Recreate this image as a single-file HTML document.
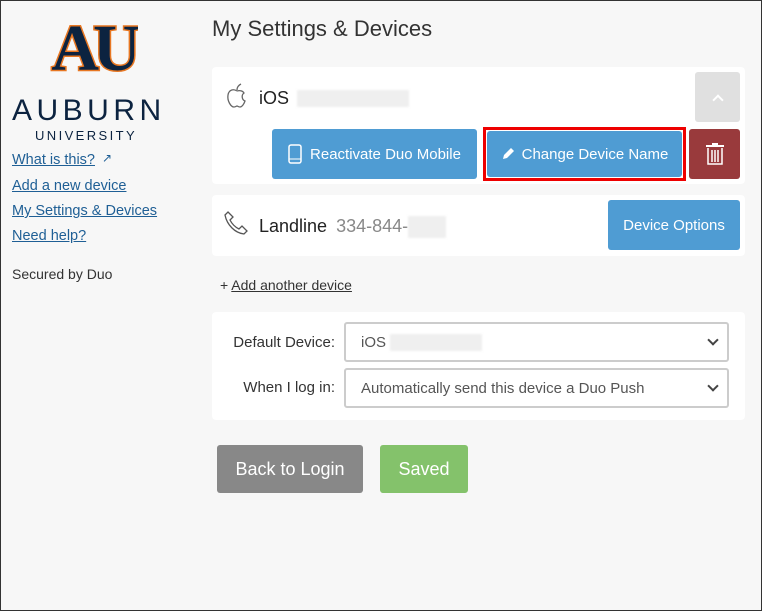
<!DOCTYPE html>
<html><head><style>
*{margin:0;padding:0;box-sizing:border-box}
body{width:762px;height:611px;background:#f7f7f7;font-family:"Liberation Sans",sans-serif;position:relative;overflow:hidden}
.a{position:absolute}
.frame{position:absolute;left:0;top:0;width:762px;height:611px;border:1px solid #333;pointer-events:none}
.lnk{color:#1f5f95;text-decoration:underline;font-size:14.5px;position:absolute;left:12px}
.card{position:absolute;background:#fff;border-radius:4px;left:212px;width:533px}
.btn{position:absolute;color:#fff;border-radius:3px;font-size:15px;display:flex;align-items:center;justify-content:center}
.blue{background:#4f9cd3}
.sel{position:absolute;left:344px;width:385px;height:40px;border:2px solid #ccc;border-radius:3px;background:#fff;font-size:15px;color:#555;padding-left:15px;display:flex;align-items:center}
.sel:after{content:"";position:absolute;right:10px;top:12px;width:6px;height:6px;border-right:2px solid #444;border-bottom:2px solid #444;transform:rotate(45deg)}
.blur{display:inline-block;background:#efefef;height:17px;vertical-align:middle;filter:blur(1px)}
.lbl{position:absolute;font-size:15px;color:#333;text-align:right;width:130px;left:205px}
</style></head><body>
<svg class="a" style="left:48px;top:10px" width="90" height="72" viewBox="0 0 90 72">
<text x="45" y="60" text-anchor="middle" font-family="Liberation Serif" font-weight="bold" font-size="66" letter-spacing="-6" fill="#0c2340" stroke="#e87722" stroke-width="3" paint-order="stroke">AU</text>
</svg>
<div class="a" style="left:12px;top:94px;font-size:30px;color:#0c2340;letter-spacing:4.5px">AUBURN</div>
<div class="a" style="left:35px;top:128px;font-size:13px;color:#0c2340;letter-spacing:2.4px">UNIVERSITY</div>
<a class="lnk" style="top:152px">What is this?</a><span class="a" style="left:102px;top:151px;font-size:12px;color:#1f5f95">&#x2197;</span>
<a class="lnk" style="top:178px">Add a new device</a>
<a class="lnk" style="top:203px">My Settings &amp; Devices</a>
<a class="lnk" style="top:228px">Need help?</a>
<div class="a" style="left:12px;top:266px;font-size:14px;color:#333">Secured by Duo</div>

<div class="a" style="left:212px;top:16px;font-size:22px;color:#333">My Settings &amp; Devices</div>

<div class="card" style="top:67px;height:117px"></div>
<svg class="a" style="left:226px;top:83px" width="22" height="26" viewBox="0 0 22 26"><path d="M11 8C8 6 3 6 2 12c-1 6 3 12 6 12 2 0 2-1 3-1s1 1 3 1c2 0 4-3 5-6-3-1-4-6-1-8-1-2-4-3-7-2M11 7c0-3 2-5 4-6" fill="none" stroke="#666" stroke-width="1.3"/></svg>
<div class="a" style="left:259px;top:88px;font-size:18px;color:#222">iOS</div>
<div class="a blur" style="left:297px;top:90px;width:112px"></div>
<div class="btn" style="left:695px;top:72px;width:45px;height:50px;background:#e0e0e0"><div style="width:8px;height:8px;border-left:2px solid #fff;border-top:2px solid #fff;transform:rotate(45deg);margin-top:5px"></div></div>
<div class="btn blue" style="left:272px;top:129px;width:205px;height:50px"><svg width="14" height="20" style="margin-right:8px"><rect x="1" y="1" width="12" height="18" rx="2" fill="none" stroke="#fff" stroke-width="1.5"/><line x1="1" y1="15" x2="13" y2="15" stroke="#fff"/></svg>Reactivate Duo Mobile</div>
<div class="a" style="left:483px;top:127px;width:203px;height:54px;border:3px solid #e00"></div>
<div class="btn blue" style="left:487px;top:131px;width:195px;height:46px"><svg width="14" height="14" style="margin-right:7px"><path d="M2 12l1-4 7-7 3 3-7 7z" fill="#fff"/></svg>Change Device Name</div>
<div class="btn" style="left:689px;top:129px;width:51px;height:50px;background:#993a3c"><svg width="20" height="22"><rect x="1" y="2" width="18" height="2" fill="#fff"/><rect x="7" y="0" width="6" height="2" fill="#fff"/><path d="M3 5v16h14V5M7 7v12M10 7v12M13 7v12" fill="none" stroke="#fff" stroke-width="1.5"/></svg></div>

<div class="card" style="top:195px;height:61px"></div>
<svg class="a" style="left:224px;top:210px" width="26" height="26"><path d="M4 2l5 5-3 3c2 4 5 7 9 9l3-3 5 5-3 3C11 23 3 15 1 5z" fill="none" stroke="#555" stroke-width="1.3"/></svg>
<div class="a" style="left:259px;top:216px;font-size:18px;color:#222">Landline <span style="color:#888;margin-left:4px">334-844-</span><span class="blur" style="width:38px;height:22px"></span></div>
<div class="btn blue" style="left:608px;top:200px;width:132px;height:50px">Device Options</div>

<div class="a" style="left:220px;top:277px;font-size:14px;color:#333">+ <u>Add another device</u></div>

<div class="card" style="top:312px;height:108px"></div>
<div class="lbl" style="top:334px">Default Device:</div>
<div class="lbl" style="top:379px">When I log in:</div>
<div class="sel" style="top:322px">iOS&nbsp;<span class="blur" style="width:92px"></span></div>
<div class="sel" style="top:368px">Automatically send this device a Duo Push</div>

<div class="btn" style="left:217px;top:445px;width:146px;height:48px;background:#888;font-size:18px">Back to Login</div>
<div class="btn" style="left:380px;top:445px;width:88px;height:48px;background:#84c26b;font-size:18px">Saved</div>
<div class="frame"></div>
</body></html>
